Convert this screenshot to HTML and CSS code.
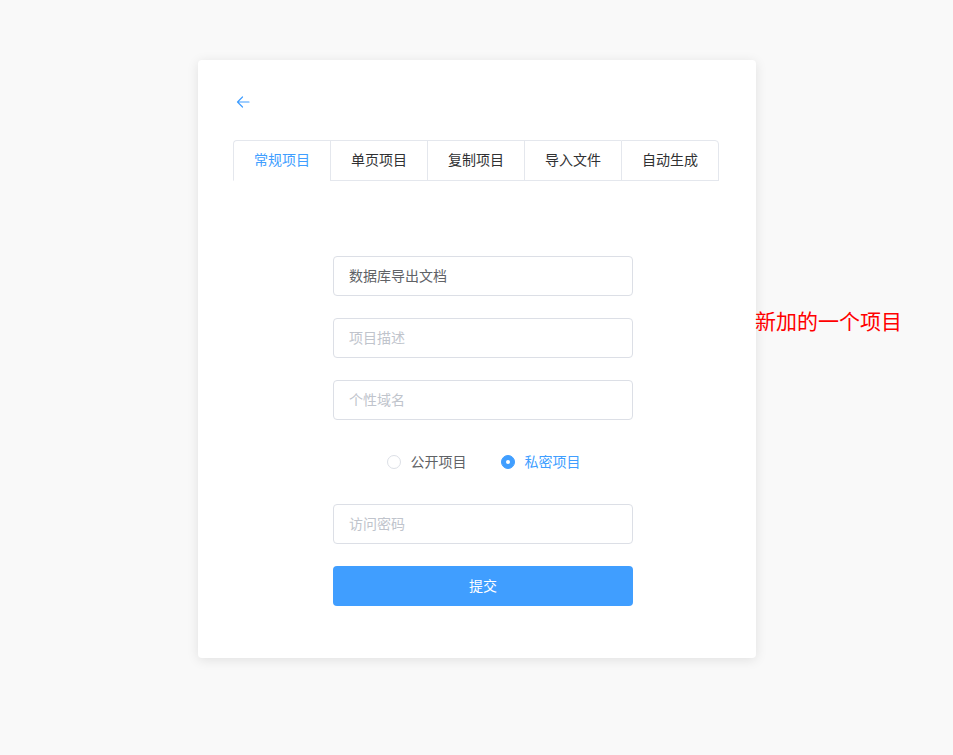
FILE: index.html
```html
<!DOCTYPE html>
<html lang="zh">
<head>
<meta charset="utf-8">
<title>新建项目</title>
<link rel="stylesheet" href="styles.css">
</head>
<body>
<div class="page">
  <div class="card">
    <div class="back">
      <svg width="14" height="14" viewBox="0 0 14 14" fill="none" stroke="#409eff" stroke-width="1.2" stroke-linecap="round" stroke-linejoin="round">
        <path d="M13 7H1.5M6.5 2L1.5 7L6.5 12"/>
      </svg>
    </div>
    <div class="tabs">
      <div class="tab active">常规项目</div>
      <div class="tab">单页项目</div>
      <div class="tab">复制项目</div>
      <div class="tab">导入文件</div>
      <div class="tab last">自动生成</div>
    </div>
    <form class="form">
      <div class="field"><input class="input" type="text" value="数据库导出文档"></div>
      <div class="field"><input class="input" type="text" placeholder="项目描述"></div>
      <div class="field"><input class="input" type="text" placeholder="个性域名"></div>
      <div class="radios">
        <label class="radio"><span class="dot"></span><span class="rlabel">公开项目</span></label>
        <label class="radio checked"><span class="dot"></span><span class="rlabel">私密项目</span></label>
      </div>
      <div class="field"><input class="input" type="text" placeholder="访问密码"></div>
      <div class="field"><button class="submit" type="button">提交</button></div>
    </form>
  </div>
  <div class="note">新加的一个项目</div>
</div>
</body>
</html>
```
FILE: styles.css
```css
html, body {
  margin: 0;
  padding: 0;
  background: #f9f9f9;
  font-family: "Noto Sans CJK SC", "Noto Sans", sans-serif;
  font-size: 14px;
  color: #303133;
}
.page {
  position: relative;
  width: 953px;
  height: 755px;
  padding-top: 60px;
  box-sizing: border-box;
}
.card {
  width: 558px;
  height: 598px;
  margin-left: 198px;
  background: #fff;
  border-radius: 4px;
  box-shadow: 0 2px 12px rgba(0, 0, 0, 0.1);
  box-sizing: border-box;
  padding: 35px 38px 0 35px;
}
.back {
  height: 14px;
  padding-left: 3px;
  display: flex;
  align-items: center;
}
.back svg { display: block; }
.tabs {
  display: flex;
  margin-top: 31px;
  width: 486px;
  border-bottom: 1px solid #e4e7ed;
}
.tab {
  width: 97px;
  height: 41px;
  box-sizing: border-box;
  display: flex;
  align-items: center;
  justify-content: center;
  padding-bottom: 3px;
  border-top: 1px solid #e4e7ed;
  border-left: 1px solid #e4e7ed;
  border-bottom: 1px solid #e4e7ed;
  margin-bottom: -1px;
  color: #303133;
}
.tab:first-child { border-top-left-radius: 4px; }
.tab.last { border-right: 1px solid #e4e7ed; border-top-right-radius: 4px; width: 98px; }
.tab.active { color: #409eff; border-bottom-color: #fff; }
.form {
  margin: 75px 0 0 100px;
  width: 300px;
  display: flex;
  flex-direction: column;
  gap: 22px;
}
.field { height: 40px; }
.input {
  width: 100%;
  height: 40px;
  box-sizing: border-box;
  border: 1px solid #dcdfe6;
  border-radius: 4px;
  padding: 0 15px 3px;
  font-family: inherit;
  font-size: 14px;
  color: #606266;
  outline: none;
  background: #fff;
}
.input::placeholder { color: #c0c4cc; }
.radios {
  height: 40px;
  display: flex;
  align-items: center;
  justify-content: center;
  gap: 34px;
  padding-left: 1px;
}
.radio {
  display: flex;
  align-items: center;
  color: #606266;
}
.rlabel { margin-top: -3px; }
.dot {
  width: 14px;
  height: 14px;
  box-sizing: border-box;
  border: 1px solid #dcdfe6;
  border-radius: 50%;
  margin-right: 10px;
  position: relative;
  background: #fff;
}
.radio.checked { color: #409eff; }
.radio.checked .dot { background: #409eff; border-color: #409eff; }
.radio.checked .dot::after {
  content: "";
  position: absolute;
  width: 4px;
  height: 4px;
  border-radius: 50%;
  background: #fff;
  left: 4px;
  top: 4px;
}
.submit {
  width: 100%;
  height: 40px;
  border: none;
  border-radius: 4px;
  background: #409eff;
  color: #fff;
  font-family: inherit;
  font-size: 14px;
  padding: 0 0 3px;
}
.note {
  position: absolute;
  left: 755px;
  top: 305px;
  font-size: 21px;
  color: #ff0000;
  line-height: 30px;
}
```
